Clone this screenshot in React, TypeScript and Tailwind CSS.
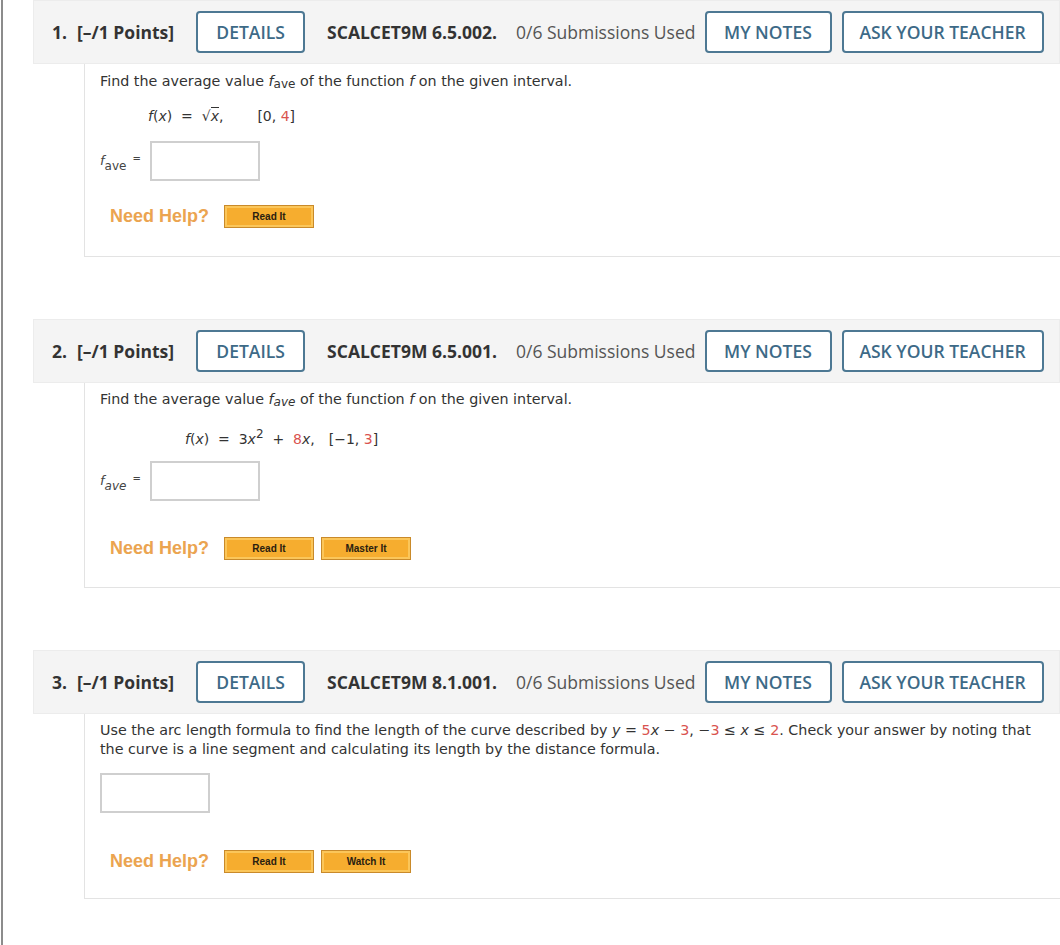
import React from "react";

const hdrFont = { fontFamily: '"Open Sans", "Liberation Sans", sans-serif' };

function OutlineBtn({ children, w }: { children: React.ReactNode; w: string }) {
  return (
    <div
      className={`${w} h-[42px] flex items-center justify-center rounded-[4px] border-2 border-[#4d7893] text-[17.5px] font-semibold text-[#3d6a87] bg-white`}
    >
      {children}
    </div>
  );
}

function Header({ n, code }: { n: number; code: string }) {
  return (
    <div
      className="ml-[30px] h-[64px] bg-[#f4f4f4] border border-[#ececec] flex items-center pl-[18px] text-[17.5px] text-[#333]"
      style={hdrFont}
    >
      <span className="font-bold w-[25px]">{n}.</span>
      <span className="font-bold">[–/1 Points]</span>
      <div className="ml-[22px]">
        <OutlineBtn w="w-[109px]">DETAILS</OutlineBtn>
      </div>
      <span className="ml-[22px] font-bold text-[#333]">{code}</span>
      <span className="ml-[19px] text-[#555]">0/6 Submissions Used</span>
      <div className="ml-[9px]">
        <OutlineBtn w="w-[127px]">MY NOTES</OutlineBtn>
      </div>
      <div className="ml-[10px]">
        <OutlineBtn w="w-[202px]">ASK YOUR TEACHER</OutlineBtn>
      </div>
    </div>
  );
}

function HelpBtn({ label }: { label: string }) {
  return (
    <div
      className="w-[90px] h-[23px] flex items-center justify-center border border-[#c98a2a] bg-[#f6ad2f] shadow-[inset_0_0_0_2px_#fbc65a] text-[10px] font-bold text-[#2a2010]"
      style={{ fontFamily: '"Liberation Sans", Arial, sans-serif' }}
    >
      {label}
    </div>
  );
}

function NeedHelp({ buttons }: { buttons: string[] }) {
  return (
    <div className="flex items-center ml-[10px]">
      <span
        className="text-[18px] font-bold text-[#eba450] mr-[12px] w-[102px]"
        style={{ fontFamily: '"Liberation Sans", Arial, sans-serif' }}
      >
        Need Help?
      </span>
      <div className="flex gap-[7px]">
        {buttons.map((b) => (
          <HelpBtn key={b} label={b} />
        ))}
      </div>
    </div>
  );
}

function Fave({ italicSub }: { italicSub?: boolean }) {
  return (
    <span className="inline-flex items-end text-[13px] text-[#444] w-[50px]">
      <span className="italic">f</span>
      <span className={`text-[12px] relative top-[4px] ${italicSub ? "italic" : ""}`}>ave</span>
      <span className="ml-[6px] text-[10px] relative -top-[5px]">=</span>
    </span>
  );
}

function Input({ w = "w-[110px]" }: { w?: string }) {
  return <div className={`${w} h-[40px] border-2 border-[#cfcfcf] bg-white`} />;
}

const Red = ({ children }: { children: React.ReactNode }) => (
  <span className="text-[#d9534f]">{children}</span>
);

const bodyFont = { fontFamily: '"DejaVu Sans", Verdana, sans-serif' };

export default function App() {
  return (
    <div className="w-[1060px] min-h-[945px] bg-white overflow-hidden">
      <div className="ml-[1px] border-l-2 border-[#8c8c8c] min-h-[945px]">
        {/* Problem 1 */}
        <Header n={1} code="SCALCET9M 6.5.002." />
        <div
          className="ml-[81px] h-[193px] border-l border-b border-[#e3e3e3] pl-[15px] text-[14.3px] text-[#333]"
          style={bodyFont}
        >
          <div className="pt-[8px] leading-[19px]">
            Find the average value <i>f</i>
            <sub className="text-[12px] relative top-[2px]">ave</sub> of the function <i>f</i> on the given interval.
          </div>
          <div className="ml-[48px] mt-[16px] leading-[19px] text-[14px] whitespace-pre">
            <i>f</i>(<i>x</i>)  =  √<span className="border-t border-[#333]"><i>x</i></span>,
            <span className="ml-[34px]">[0, <Red>4</Red>]</span>
          </div>
          <div className="flex items-center mt-[15px]">
            <Fave />
            <Input />
          </div>
          <div className="mt-[22px]">
            <NeedHelp buttons={["Read It"]} />
          </div>
        </div>

        <div className="h-[62px]" />

        {/* Problem 2 */}
        <Header n={2} code="SCALCET9M 6.5.001." />
        <div
          className="ml-[81px] h-[205px] border-l border-b border-[#e3e3e3] pl-[15px] text-[14.3px] text-[#333]"
          style={bodyFont}
        >
          <div className="pt-[7px] leading-[19px]">
            Find the average value <i>f</i>
            <sub className="text-[12px] italic relative top-[2px]">ave</sub> of the function <i>f</i> on the given interval.
          </div>
          <div className="ml-[85px] mt-[21px] leading-[19px] text-[14px] whitespace-pre">
            <i>f</i>(<i>x</i>)  =  3<i>x</i>
            <sup className="text-[12px]">2</sup>  +  <Red>8</Red><i>x</i>,
            <span className="ml-[14px]">[−1, <Red>3</Red>]</span>
          </div>
          <div className="flex items-center mt-[12px]">
            <Fave italicSub />
            <Input />
          </div>
          <div className="mt-[34px]">
            <NeedHelp buttons={["Read It", "Master It"]} />
          </div>
        </div>

        <div className="h-[62px]" />

        {/* Problem 3 */}
        <Header n={3} code="SCALCET9M 8.1.001." />
        <div
          className="ml-[81px] h-[185px] border-l border-b border-[#e3e3e3] pl-[15px] pr-[10px] text-[14.3px] text-[#333]"
          style={bodyFont}
        >
          <div className="pt-[7px] leading-[19px]">
            Use the arc length formula to find the length of the curve described by <i>y</i> = <Red>5</Red>
            <i>x</i> − <Red>3</Red>, −<Red>3</Red> ≤ <i>x</i> ≤ <Red>2</Red>. Check your answer by noting that the
            curve is a line segment and calculating its length by the distance formula.
          </div>
          <div className="mt-[14px]">
            <Input />
          </div>
          <div className="mt-[35px]">
            <NeedHelp buttons={["Read It", "Watch It"]} />
          </div>
        </div>
      </div>
    </div>
  );
}
